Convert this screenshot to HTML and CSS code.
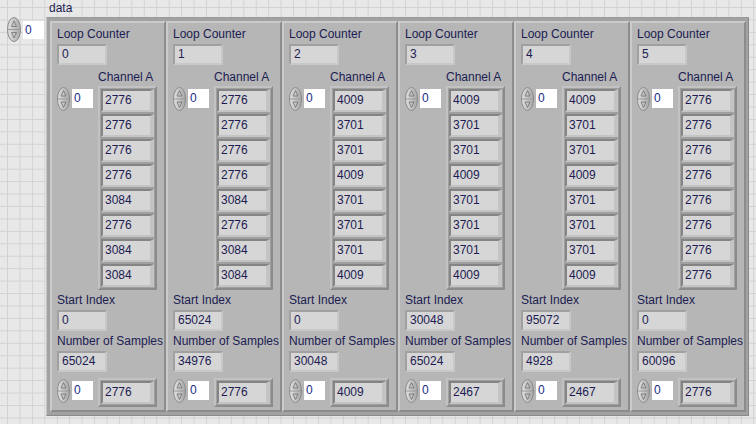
FILE: index.html
```html
<!DOCTYPE html>
<html>
<head>
<meta charset="utf-8">
<link rel="stylesheet" href="styles.css">
</head>
<body>
<div class="panel">
  <div class="outer-index">
    <svg class="spin" width="14" height="25" viewBox="0 0 14 25"><defs><linearGradient id="g0" x1="0" x2="1" y1="0" y2="0"><stop offset="0" stop-color="#e4e4e4"/><stop offset="1" stop-color="#a9a9a9"/></linearGradient></defs><ellipse cx="7" cy="12.5" rx="6.5" ry="12" fill="url(#g0)" stroke="#8a8a8a"/><line x1="1" y1="12.5" x2="13" y2="12.5" stroke="#9a9a9a"/><path d="M7 4 L4.5 9.5 L9.5 9.5 Z" fill="none" stroke="#707070" stroke-width="0.8"/><path d="M7 21 L4.5 15.5 L9.5 15.5 Z" fill="none" stroke="#707070" stroke-width="0.8"/></svg>
    <div class="idx">0</div>
  </div>
  <div class="array">
    <div class="array-label">data</div>
    <div class="array-frame" id="frame"></div>
  </div>
</div>
<script src="app.js"></script>
</body>
</html>
```
FILE: app.js
```js
var data = [
  {lc:0, ch:[2776,2776,2776,2776,3084,2776,3084,3084], si:0, ns:65024, b:2776},
  {lc:1, ch:[2776,2776,2776,2776,3084,2776,3084,3084], si:65024, ns:34976, b:2776},
  {lc:2, ch:[4009,3701,3701,4009,3701,3701,3701,4009], si:0, ns:30048, b:4009},
  {lc:3, ch:[4009,3701,3701,4009,3701,3701,3701,4009], si:30048, ns:65024, b:2467},
  {lc:4, ch:[4009,3701,3701,4009,3701,3701,3701,4009], si:95072, ns:4928, b:2467},
  {lc:5, ch:[2776,2776,2776,2776,2776,2776,2776,2776], si:0, ns:60096, b:2776}
];
var spin = '<svg class="spin" width="13" height="24" viewBox="0 0 13 24"><defs><linearGradient id="gS" x1="0" x2="1" y1="0" y2="0"><stop offset="0" stop-color="#e2e2e2"/><stop offset="1" stop-color="#a6a6a6"/></linearGradient></defs><ellipse cx="6.5" cy="12" rx="6" ry="11.5" fill="url(#gS)" stroke="#8a8a8a"/><line x1="1" y1="12" x2="12" y2="12" stroke="#9a9a9a"/><path d="M6.5 3.5 L4 9 L9 9 Z" fill="none" stroke="#707070" stroke-width="0.8"/><path d="M6.5 20.5 L4 15 L9 15 Z" fill="none" stroke="#707070" stroke-width="0.8"/></svg>';
var html = '';
data.forEach(function(c){
  html += '<div class="cluster">' +
    '<div class="lbl">Loop Counter</div>' +
    '<div class="ind">' + c.lc + '</div>' +
    '<div class="lbl ch-lbl">Channel A</div>' +
    '<div class="row">' + spin + '<div class="idx">0</div>' +
      '<div class="arr">' + c.ch.map(function(v){return '<div class="el">' + v + '</div>';}).join('') + '</div>' +
    '</div>' +
    '<div class="lbl si-lbl">Start Index</div>' +
    '<div class="ind">' + c.si + '</div>' +
    '<div class="lbl ns-lbl">Number of Samples</div>' +
    '<div class="ind">' + c.ns + '</div>' +
    '<div class="row brow">' + spin + '<div class="idx">0</div>' +
      '<div class="arr"><div class="el">' + c.b + '</div></div>' +
    '</div>' +
  '</div>';
});
document.getElementById('frame').innerHTML = html;
```
FILE: styles.css
```css
html, body {
  margin: 0;
  padding: 0;
}
body {
  width: 756px;
  height: 424px;
  overflow: hidden;
  font-family: "Liberation Sans", Arial, sans-serif;
  font-size: 12px;
  color: #1c1c52;
  background-color: #e8e8e8;
  background-image:
    linear-gradient(to right, #d2d2d2 1px, transparent 1px),
    linear-gradient(to bottom, #d2d2d2 1px, transparent 1px);
  background-size: 12.45px 12.45px;
  background-position: 7px 7px;
}
.panel {
  display: flex;
  padding: 1px 0 0 7px;
}
.outer-index {
  display: flex;
  align-items: flex-start;
  width: 39px;
  margin-top: 16px;
}
.outer-index .idx {
  width: 21px;
  height: 18px;
  margin-top: 4px;
  margin-left: 2px;
}
.spin {
  display: block;
  flex: none;
}
.idx {
  flex: none;
  box-sizing: border-box;
  background: #ffffff;
  color: #1a2c8a;
  line-height: 18px;
  padding-left: 2px;
}
.array-label {
  height: 14px;
  line-height: 14px;
  padding-left: 3px;
  margin-bottom: 2px;
}
.array-frame {
  display: flex;
  box-sizing: border-box;
  width: 703px;
  height: 399px;
  padding: 3px 2px 3px 3px;
  background: #a2a2a2;
  border-top: 1px solid #9a9a9a;
  border-left: 1px solid #c4c4c4;
  border-right: 1px solid #8a8a8a;
  border-bottom: 1px solid #8a8a8a;
}
.cluster {
  box-sizing: border-box;
  width: 116px;
  height: 391px;
  flex: none;
  padding: 4px 0 0 5px;
  background: #b6b6b6;
  border: 2px solid;
  border-color: #cbcbcb #8c8c8c #8c8c8c #cbcbcb;
}
.lbl {
  height: 14px;
  line-height: 14px;
  white-space: nowrap;
}
.ind {
  box-sizing: border-box;
  width: 50px;
  height: 21px;
  margin-top: 3px;
  line-height: 17px;
  padding-left: 3px;
  background: #d6d6d6;
  border: 2px solid;
  border-color: #a0a0a0 #c8c8c8 #c8c8c8 #a0a0a0;
}
.ch-lbl {
  margin-top: 5px;
  padding-left: 41px;
}
.row {
  display: flex;
  align-items: flex-start;
  margin-top: 2px;
}
.row .spin {
  margin-top: 1px;
}
.row .idx {
  width: 21px;
  height: 19px;
  margin: 3px 0 0 2px;
}
.arr {
  box-sizing: border-box;
  width: 59px;
  margin-left: 5px;
  padding: 1px;
  display: flex;
  flex-direction: column;
  gap: 2px;
  background: #a0a0a0;
  border: 2px solid;
  border-color: #c2c2c2 #8c8c8c #8c8c8c #c2c2c2;
}
.el {
  box-sizing: border-box;
  height: 23px;
  line-height: 19px;
  padding-left: 2px;
  background: #d6d6d6;
  border-style: solid;
  border-width: 2px 4px 2px 2px;
  border-color: #848484 #c4c4c4 #c4c4c4 #848484;
}
.si-lbl {
  margin-top: 3px;
}
.ns-lbl {
  margin-top: 3px;
}
.brow {
  margin-top: 6px;
}
```
